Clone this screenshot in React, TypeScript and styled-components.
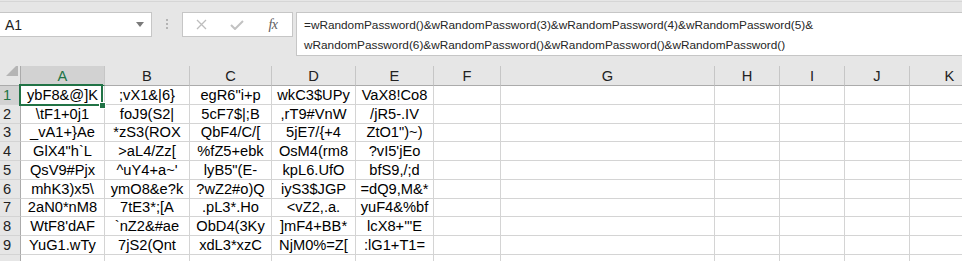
import React from 'react'
import styled, { createGlobalStyle } from 'styled-components'

const GlobalStyle = createGlobalStyle`
  body {
    margin: 0;
    background: #fff;
    overflow: hidden;
    font-family: 'Liberation Sans', Arial, sans-serif;
  }
`

const GREEN = '#217346'
const GRID = '#d4d4d4'
const ROW_H = 18.78

const columns = [
  { label: 'A', width: 84 },
  { label: 'B', width: 85 },
  { label: 'C', width: 82 },
  { label: 'D', width: 84 },
  { label: 'E', width: 78 },
  { label: 'F', width: 67 },
  { label: 'G', width: 214 },
  { label: 'H', width: 65 },
  { label: 'I', width: 65 },
  { label: 'J', width: 65 },
  { label: 'K', width: 80 },
]

const data = [
  ['ybF8&@]K', ';vX1&|6}', 'egR6"i+p', 'wkC3$UPy', 'VaX8!Co8'],
  ['\\tF1+0j1', 'foJ9(S2|', '5cF7$|;B', ',rT9#VnW', '/jR5-.IV'],
  ['_vA1+}Ae', '*zS3(ROX', 'QbF4/C/[', '5jE7/{+4', 'ZtO1")~)'],
  ['GlX4"h`L', '>aL4/Zz[', '%fZ5+ebk', 'OsM4(rm8', "?vI5'jEo"],
  ['QsV9#Pjx', "^uY4+a~'", 'lyB5"(E-', 'kpL6.UfO', 'bfS9,/;d'],
  ['mhK3)x5\\', 'ymO8&e?k', '?wZ2#o)Q', 'iyS3$JGP', '=dQ9,M&*'],
  ['2aN0*nM8', '7tE3*;[A', '.pL3*.Ho', '<vZ2,.a.', 'yuF4&%bf'],
  ["WtF8'dAF", '`nZ2&#ae', 'ObD4(3Ky', ']mF4+BB*', 'lcX8+\'"E'],
  ['YuG1.wTy', '7jS2(Qnt', 'xdL3*xzC', 'NjM0%=Z[', ':lG1+T1='],
]

const formulaLines = [
  '=wRandomPassword()&wRandomPassword(3)&wRandomPassword(4)&wRandomPassword(5)&',
  'wRandomPassword(6)&wRandomPassword()&wRandomPassword()&wRandomPassword()',
]

const Window = styled.div`
  width: 962px;
  height: 261px;
  overflow: hidden;
  display: flex;
  flex-direction: column;
  background: #e6e6e6;
`

const FormulaBar = styled.div`
  margin-top: 1px;
  border-top: 1px solid #d6d6d6;
  height: 65px;
  box-sizing: border-box;
  padding-top: 10px;
  display: flex;
  align-items: flex-start;
  flex-shrink: 0;
`

const NameBox = styled.div`
  margin-left: -1px;
  width: 153px;
  height: 25px;
  box-sizing: border-box;
  border: 1px solid #c6c6c6;
  background: #fff;
  display: flex;
  align-items: center;
  justify-content: space-between;
  padding: 0 7px 0 5px;
  font-size: 14px;
  color: #222;
`

const Dots = styled.div`
  margin: 7px 0 0 14px;
  display: flex;
  flex-direction: column;
  gap: 2px;

  span {
    width: 2px;
    height: 2px;
    background: #b4b4b4;
  }
`

const ButtonBox = styled.div`
  margin-left: 14px;
  width: 111px;
  height: 25px;
  box-sizing: border-box;
  border: 1px solid #c6c6c6;
  background: #fff;
  display: flex;
  align-items: center;
`

const ToolButton = styled.div`
  width: 36px;
  height: 100%;
  display: flex;
  align-items: center;
  justify-content: center;
`

const Fx = styled.span`
  font-family: 'Liberation Serif', 'Times New Roman', serif;
  font-style: italic;
  font-size: 14px;
  color: #5e5e5e;
  letter-spacing: -0.5px;
`

const FormulaBox = styled.div`
  margin-left: 3px;
  flex: 1;
  margin-right: -4px;
  height: 44px;
  box-sizing: border-box;
  border: 1px solid #c6c6c6;
  background: #fff;
  padding: 2px 0 0 7px;
  font-size: 11.8px;
  line-height: 20px;
  color: #262626;
  white-space: nowrap;
`

const Sheet = styled.div`
  position: relative;
  flex: 1;
  overflow: hidden;
  display: grid;
  grid-template-columns: 21px ${columns.map((c) => `${c.width}px`).join(' ')};
  grid-template-rows: 20px;
  grid-auto-rows: ${ROW_H}px;
  align-content: start;
  font-size: 14.67px;
`

const Corner = styled.div`
  box-sizing: border-box;
  background: #e6e6e6;
  border-right: 1px solid #ababab;
  border-bottom: 1px solid #ababab;
  display: flex;
  align-items: flex-start;
  justify-content: flex-end;
  padding: 0 2px 0 0;
`

const ColHeader = styled.div<{ $selected?: boolean }>`
  box-sizing: border-box;
  background: ${(p) => (p.$selected ? '#d2d2d2' : '#e6e6e6')};
  color: ${(p) => (p.$selected ? GREEN : '#222')};
  border-right: 1px solid #c6c6c6;
  border-bottom: 1px solid ${(p) => (p.$selected ? GREEN : '#ababab')};
  display: flex;
  align-items: center;
  justify-content: center;
`

const RowHeader = styled.div<{ $selected?: boolean }>`
  box-sizing: border-box;
  background: ${(p) => (p.$selected ? '#d2d2d2' : '#e6e6e6')};
  color: ${(p) => (p.$selected ? GREEN : '#222')};
  border-right: 1px solid ${(p) => (p.$selected ? GREEN : '#ababab')};
  border-bottom: 1px solid ${GRID};
  display: flex;
  align-items: center;
  padding-left: 3px;
`

const Cell = styled.div`
  box-sizing: border-box;
  background: #fff;
  color: #000;
  border-right: 1px solid ${GRID};
  border-bottom: 1px solid ${GRID};
  display: flex;
  align-items: center;
  justify-content: center;
  white-space: nowrap;
  overflow: hidden;
`

const Selection = styled.div`
  position: absolute;
  left: 19px;
  top: 18px;
  width: 84px;
  height: 22px;
  box-sizing: border-box;
  border: 2px solid ${GREEN};
  pointer-events: none;
`

const FillHandle = styled.div`
  position: absolute;
  right: -5px;
  bottom: -5px;
  width: 7px;
  height: 7px;
  box-sizing: border-box;
  background: ${GREEN};
  border: 1px solid #fff;
`

const DropArrow = () => (
  <svg width="8" height="5" viewBox="0 0 8 5">
    <path d="M0 0h8L4 5z" fill="#7a7a7a" />
  </svg>
)

const CancelIcon = () => (
  <svg width="11" height="11" viewBox="0 0 11 11">
    <path d="M1 1l9 9M10 1l-9 9" stroke="#bdbdbd" strokeWidth="1.3" fill="none" />
  </svg>
)

const EnterIcon = () => (
  <svg width="14" height="10" viewBox="0 0 14 10">
    <path d="M1 5l4 4 8-8" stroke="#c2c2c2" strokeWidth="2" fill="none" />
  </svg>
)

const SelectAll = () => (
  <svg width="12" height="12" viewBox="0 0 12 12" style={{ marginTop: -2 }}>
    <path d="M12 0v12H0z" fill="#b5b5b5" />
  </svg>
)

export default function App() {
  return (
    <>
      <GlobalStyle />
      <Window>
        <FormulaBar>
          <NameBox>
            <span>A1</span>
            <DropArrow />
          </NameBox>
          <Dots>
            <span />
            <span />
            <span />
          </Dots>
          <ButtonBox>
            <ToolButton>
              <CancelIcon />
            </ToolButton>
            <ToolButton>
              <EnterIcon />
            </ToolButton>
            <ToolButton>
              <Fx>fx</Fx>
            </ToolButton>
          </ButtonBox>
          <FormulaBox>
            {formulaLines.map((line) => (
              <div key={line}>{line}</div>
            ))}
          </FormulaBox>
        </FormulaBar>
        <Sheet>
          <Corner>
            <SelectAll />
          </Corner>
          {columns.map((c) => (
            <ColHeader key={c.label} $selected={c.label === 'A'}>
              {c.label}
            </ColHeader>
          ))}
          {data.map((row, r) => (
            <React.Fragment key={r}>
              <RowHeader $selected={r === 0}>{r + 1}</RowHeader>
              {columns.map((c, i) => (
                <Cell key={c.label}>{row[i] ?? ''}</Cell>
              ))}
            </React.Fragment>
          ))}
          {/* row 10 is only a sliver at the bottom edge, its number is out of view */}
          <RowHeader />
          {columns.map((c) => (
            <Cell key={c.label} />
          ))}
          <Selection>
            <FillHandle />
          </Selection>
        </Sheet>
      </Window>
    </>
  )
}
